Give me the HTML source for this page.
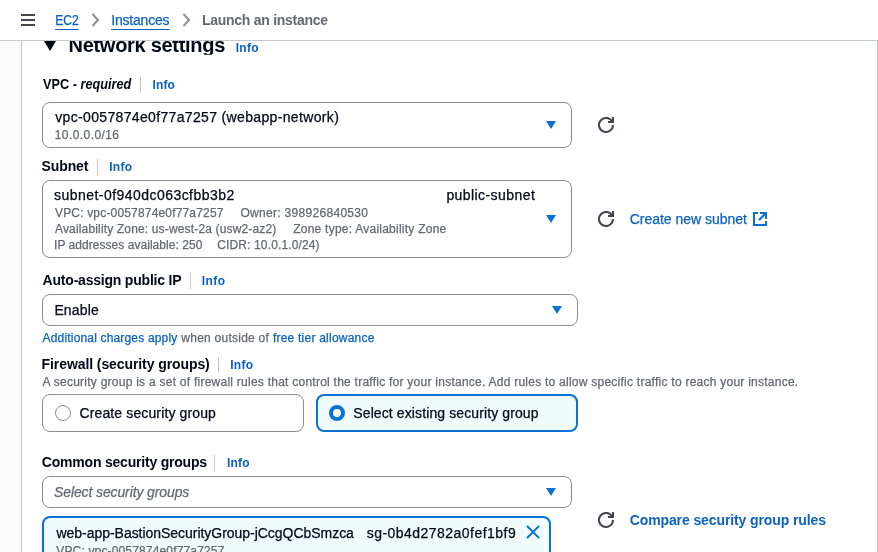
<!DOCTYPE html>
<html><head><meta charset="utf-8">
<style>
*{box-sizing:border-box;margin:0;padding:0}
html,body{width:878px;height:552px;overflow:hidden;background:#fff;font-family:"Liberation Sans",sans-serif;color:#000716}
.a{position:absolute}
.t{position:absolute;white-space:nowrap}
#tx{position:absolute;left:0;top:0;width:878px;height:552px;will-change:transform}
.t.n{-webkit-text-stroke:0.25px currentColor}
</style></head><body>
<div class="a" style="left:0;top:0;width:878px;height:552px;background:#fbfbfb"></div>
<div class="a" style="left:21px;top:30px;width:857px;height:560px;background:#fff;border-left:1px solid #c6c6cd;border-right:1px solid #c6c6cd"></div>
<div class="a" style="left:0;top:0;width:878px;height:41px;background:#fff;border-bottom:1px solid #c6c6cd"></div>
<div class="a" style="left:21px;top:14px;width:14px;height:2px;background:#424650"></div>
<div class="a" style="left:21px;top:19px;width:14px;height:2px;background:#424650"></div>
<div class="a" style="left:21px;top:24px;width:14px;height:2px;background:#424650"></div>
<svg class="a" style="left:88px;top:12px" width="14" height="16" viewBox="0 0 14 16"><path d="M4.5 2l5.5 6-5.5 6" fill="none" stroke="#8c8c94" stroke-width="2"/></svg>
<svg class="a" style="left:179px;top:12px" width="14" height="16" viewBox="0 0 14 16"><path d="M4.5 2l5.5 6-5.5 6" fill="none" stroke="#8c8c94" stroke-width="2"/></svg>
<!-- heading triangle, clipped -->
<div class="a" style="left:0;top:41px;width:300px;height:20px;overflow:hidden">
 <svg class="a" style="left:44px;top:0px" width="12" height="10" viewBox="0 0 12 10"><path d="M0 0h12l-6 10z" fill="#000716"/></svg>
</div>
<!-- VPC -->
<div class="a" style="left:140px;top:77px;width:1px;height:15.5px;background:#c6c6cd"></div>
<div class="a" style="left:42px;top:102px;width:530px;height:46px;border:1px solid #8c8c94;border-radius:8px;background:#fff"></div>
<svg class="a" style="left:546px;top:121px" width="10" height="8" viewBox="0 0 10 8"><path d="M0 0h10L5 8z" fill="#0972d3"/></svg>
<!-- Subnet -->
<div class="a" style="left:97px;top:159px;width:1px;height:16px;background:#c6c6cd"></div>
<div class="a" style="left:42px;top:180px;width:530px;height:78px;border:1px solid #8c8c94;border-radius:8px;background:#fff"></div>
<svg class="a" style="left:546px;top:214.5px" width="10" height="8" viewBox="0 0 10 8"><path d="M0 0h10L5 8z" fill="#0972d3"/></svg>
<!-- Auto assign -->
<div class="a" style="left:190px;top:273px;width:1px;height:16px;background:#c6c6cd"></div>
<div class="a" style="left:42px;top:294px;width:536px;height:32px;border:1px solid #8c8c94;border-radius:8px;background:#fff"></div>
<svg class="a" style="left:552px;top:306px" width="10" height="8" viewBox="0 0 10 8"><path d="M0 0h10L5 8z" fill="#0972d3"/></svg>
<!-- Firewall -->
<div class="a" style="left:218px;top:357px;width:1px;height:16px;background:#c6c6cd"></div>
<div class="a" style="left:42px;top:394px;width:262px;height:38px;border:1px solid #8c8c94;border-radius:8px;background:#fff"></div>
<div class="a" style="left:55px;top:405px;width:16px;height:16px;border:1.2px solid #8c8c94;border-radius:50%;background:#fff"></div>
<div class="a" style="left:316px;top:394px;width:262px;height:38px;border:2px solid #0972d3;border-radius:8px;background:#f0fbff"></div>
<div class="a" style="left:329px;top:405px;width:16px;height:16px;border:4.7px solid #0972d3;border-radius:50%;background:#fff"></div>
<!-- Common SG -->
<div class="a" style="left:214px;top:455px;width:1px;height:16px;background:#c6c6cd"></div>
<div class="a" style="left:42px;top:476px;width:530px;height:32px;border:1px solid #8c8c94;border-radius:8px;background:#fff"></div>
<svg class="a" style="left:546px;top:488px" width="10" height="8" viewBox="0 0 10 8"><path d="M0 0h10L5 8z" fill="#0972d3"/></svg>
<div class="a" style="left:42px;top:516px;width:509px;height:60px;border:2px solid #0972d3;border-radius:8px;background:#f0fbff"></div>
<svg class="a" style="left:525px;top:524px" width="16" height="16" viewBox="0 0 16 16"><path d="M2 2l12 12M14 2L2 14" fill="none" stroke="#0972d3" stroke-width="1.8"/></svg>
<!-- refresh icons -->
<svg class="a" style="left:598px;top:117px" width="16" height="16" viewBox="0 0 16 16"><path d="M15 8A7 7 0 1 1 14.33 5" fill="none" stroke="#424650" stroke-width="2"/><path d="M15 0v5h-5" fill="none" stroke="#424650" stroke-width="2"/></svg>
<svg class="a" style="left:598px;top:211px" width="16" height="16" viewBox="0 0 16 16"><path d="M15 8A7 7 0 1 1 14.33 5" fill="none" stroke="#424650" stroke-width="2"/><path d="M15 0v5h-5" fill="none" stroke="#424650" stroke-width="2"/></svg>
<svg class="a" style="left:598px;top:512px" width="16" height="16" viewBox="0 0 16 16"><path d="M15 8A7 7 0 1 1 14.33 5" fill="none" stroke="#424650" stroke-width="2"/><path d="M15 0v5h-5" fill="none" stroke="#424650" stroke-width="2"/></svg>
<!-- external icon -->
<svg class="a" style="left:753px;top:212px" width="14" height="14" viewBox="0 0 14 14"><path d="M5 1H1v12h12V9" fill="none" stroke="#0972d3" stroke-width="2"/><path d="M7 1h6v6" fill="none" stroke="#0972d3" stroke-width="2"/><path d="M13 1L6 8" fill="none" stroke="#0972d3" stroke-width="2"/></svg>

<div id="tx">
<div class="t n" style="left:55.20px;top:13.00px;font-size:14px;line-height:14px;font-weight:normal;font-style:normal;color:#0b62c2;letter-spacing:0.000px;transform:scaleX(0.8654);transform-origin:1px 0;text-decoration:underline;text-underline-offset:4px">EC2</div>
<div class="t n" style="left:111.20px;top:13.00px;font-size:14px;line-height:14px;font-weight:normal;font-style:normal;color:#0b62c2;letter-spacing:-0.188px;text-decoration:underline;text-underline-offset:4px">Instances</div>
<div class="t" style="left:202.00px;top:13.00px;font-size:14px;line-height:14px;font-weight:bold;font-style:normal;color:#656871;letter-spacing:-0.276px;">Launch an instance</div>
<div class="t" style="clip-path:inset(6.30px 0 0 0);left:68.50px;top:34.70px;font-size:20px;line-height:20px;font-weight:bold;font-style:normal;color:#000716;letter-spacing:-0.287px;">Network settings</div>
<div class="t" style="left:235.70px;top:42.00px;font-size:12px;line-height:12px;font-weight:bold;font-style:normal;color:#0b62c2;letter-spacing:0.267px;">Info</div>
<div class="t" style="left:42.60px;top:77.00px;font-size:14px;line-height:14px;font-weight:bold;font-style:normal;color:#000716;letter-spacing:0.000px;transform:scaleX(0.9082);transform-origin:0px 0;">VPC - <i>required</i></div>
<div class="t" style="left:152.60px;top:79.00px;font-size:12px;line-height:12px;font-weight:bold;font-style:normal;color:#0b62c2;letter-spacing:0.067px;">Info</div>
<div class="t n" style="left:55.20px;top:110.30px;font-size:14px;line-height:14px;font-weight:normal;font-style:normal;color:#000716;letter-spacing:0.346px;">vpc-0057874e0f77a7257 (webapp-network)</div>
<div class="t n" style="left:54.70px;top:128.70px;font-size:12px;line-height:12px;font-weight:normal;font-style:normal;color:#656871;letter-spacing:0.430px;">10.0.0.0/16</div>
<div class="t" style="left:41.50px;top:159.30px;font-size:14px;line-height:14px;font-weight:bold;font-style:normal;color:#000716;letter-spacing:-0.100px;">Subnet</div>
<div class="t" style="left:109.20px;top:161.30px;font-size:12px;line-height:12px;font-weight:bold;font-style:normal;color:#0b62c2;letter-spacing:0.267px;">Info</div>
<div class="t n" style="left:54.00px;top:188.00px;font-size:14px;line-height:14px;font-weight:normal;font-style:normal;color:#000716;letter-spacing:0.457px;">subnet-0f940dc063cfbb3b2</div>
<div class="t n" style="left:446.40px;top:188.00px;font-size:14px;line-height:14px;font-weight:normal;font-style:normal;color:#000716;letter-spacing:0.425px;">public-subnet</div>
<div class="t n" style="left:55.00px;top:207.00px;font-size:12px;line-height:12px;font-weight:normal;font-style:normal;color:#656871;letter-spacing:0.172px;">VPC: vpc-0057874e0f77a7257</div>
<div class="t n" style="left:240.40px;top:207.00px;font-size:12px;line-height:12px;font-weight:normal;font-style:normal;color:#656871;letter-spacing:0.306px;">Owner: 398926840530</div>
<div class="t n" style="left:55.00px;top:223.00px;font-size:12px;line-height:12px;font-weight:normal;font-style:normal;color:#656871;letter-spacing:0.156px;">Availability Zone: us-west-2a (usw2-az2)</div>
<div class="t n" style="left:293.20px;top:223.00px;font-size:12px;line-height:12px;font-weight:normal;font-style:normal;color:#656871;letter-spacing:0.241px;">Zone type: Availability Zone</div>
<div class="t n" style="left:54.00px;top:239.00px;font-size:12px;line-height:12px;font-weight:normal;font-style:normal;color:#656871;letter-spacing:0.042px;">IP addresses available: 250</div>
<div class="t n" style="left:217.30px;top:239.00px;font-size:12px;line-height:12px;font-weight:normal;font-style:normal;color:#656871;letter-spacing:0.129px;">CIDR: 10.0.1.0/24)</div>
<div class="t n" style="left:629.70px;top:211.80px;font-size:14px;line-height:14px;font-weight:normal;font-style:normal;color:#0b62c2;letter-spacing:-0.013px;">Create new subnet</div>
<div class="t" style="left:42.60px;top:273.40px;font-size:14px;line-height:14px;font-weight:bold;font-style:normal;color:#000716;letter-spacing:-0.210px;">Auto-assign public IP</div>
<div class="t" style="left:201.80px;top:275.40px;font-size:12px;line-height:12px;font-weight:bold;font-style:normal;color:#0b62c2;letter-spacing:0.433px;">Info</div>
<div class="t n" style="left:54.40px;top:302.80px;font-size:14px;line-height:14px;font-weight:normal;font-style:normal;color:#000716;letter-spacing:0.140px;">Enable</div>
<div class="t n" style="left:42.60px;top:332.30px;font-size:12px;line-height:12px;font-weight:normal;font-style:normal;color:#0b62c2;letter-spacing:0.170px;">Additional charges apply</div>
<div class="t n" style="left:181.30px;top:332.30px;font-size:12px;line-height:12px;font-weight:normal;font-style:normal;color:#656871;letter-spacing:0.250px;">when outside of</div>
<div class="t n" style="left:272.90px;top:332.30px;font-size:12px;line-height:12px;font-weight:normal;font-style:normal;color:#0b62c2;letter-spacing:0.228px;">free tier allowance</div>
<div class="t" style="left:41.60px;top:357.00px;font-size:14px;line-height:14px;font-weight:bold;font-style:normal;color:#000716;letter-spacing:-0.088px;">Firewall (security groups)</div>
<div class="t" style="left:230.20px;top:359.00px;font-size:12px;line-height:12px;font-weight:bold;font-style:normal;color:#0b62c2;letter-spacing:0.267px;">Info</div>
<div class="t n" style="left:42.60px;top:375.90px;font-size:12px;line-height:12px;font-weight:normal;font-style:normal;color:#656871;letter-spacing:0.249px;">A security group is a set of firewall rules that control the traffic for your instance. Add rules to allow specific traffic to reach your instance.</div>
<div class="t n" style="left:79.50px;top:406.30px;font-size:14px;line-height:14px;font-weight:normal;font-style:normal;color:#000716;letter-spacing:0.125px;">Create security group</div>
<div class="t n" style="left:353.30px;top:406.30px;font-size:14px;line-height:14px;font-weight:normal;font-style:normal;color:#000716;letter-spacing:0.107px;">Select existing security group</div>
<div class="t" style="left:41.80px;top:455.00px;font-size:14px;line-height:14px;font-weight:bold;font-style:normal;color:#000716;letter-spacing:-0.205px;">Common security groups</div>
<div class="t" style="left:226.90px;top:457.00px;font-size:12px;line-height:12px;font-weight:bold;font-style:normal;color:#0b62c2;letter-spacing:0.233px;">Info</div>
<div class="t n" style="left:54.00px;top:485.10px;font-size:14px;line-height:14px;font-weight:normal;font-style:italic;color:#656871;letter-spacing:-0.114px;">Select security groups</div>
<div class="t n" style="left:56.50px;top:525.50px;font-size:14px;line-height:14px;font-weight:normal;font-style:normal;color:#000716;letter-spacing:-0.035px;">web-app-BastionSecurityGroup-jCcgQCbSmzca</div>
<div class="t n" style="left:366.70px;top:525.50px;font-size:14px;line-height:14px;font-weight:normal;font-style:normal;color:#000716;letter-spacing:0.468px;">sg-0b4d2782a0fef1bf9</div>
<div class="t n" style="left:56.30px;top:545.00px;font-size:12px;line-height:12px;font-weight:normal;font-style:normal;color:#656871;letter-spacing:0.156px;">VPC: vpc-0057874e0f77a7257</div>
<div class="t" style="left:629.70px;top:513.00px;font-size:14px;line-height:14px;font-weight:bold;font-style:normal;color:#0b62c2;letter-spacing:-0.107px;">Compare security group rules</div>
</div>
</body></html>
